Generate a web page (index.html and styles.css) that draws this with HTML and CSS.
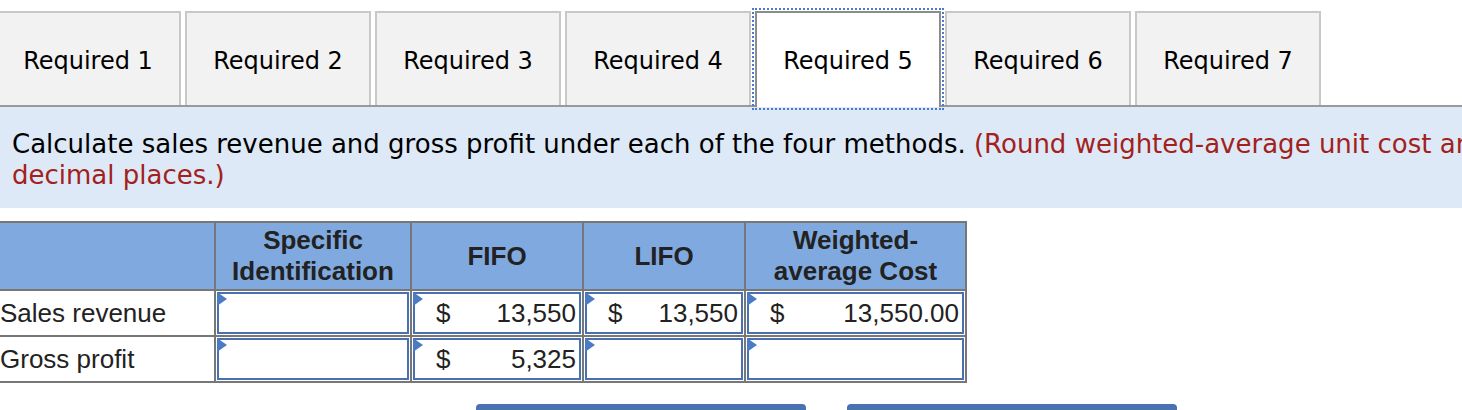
FILE: index.html
```html
<!DOCTYPE html>
<html>
<head>
<meta charset="utf-8">
<title>Required 5</title>
<link rel="stylesheet" href="styles.css">
</head>
<body>
<div class="page">
  <nav class="tabs">
    <div class="tab">Required 1</div>
    <div class="tab">Required 2</div>
    <div class="tab">Required 3</div>
    <div class="tab">Required 4</div>
    <div class="tab active">Required 5</div>
    <div class="tab">Required 6</div>
    <div class="tab">Required 7</div>
  </nav>
  <div class="question">Calculate sales revenue and gross profit under each of the four methods. <span class="hint">(Round weighted-average unit cost and final answers to 2<br>decimal places.)</span></div>
  <div class="grid">
    <div class="hd"></div>
    <div class="hd">Specific Identification</div>
    <div class="hd">FIFO</div>
    <div class="hd">LIFO</div>
    <div class="hd">Weighted-average Cost</div>

    <div class="lbl">Sales revenue</div>
    <div class="cell"><div class="inp"></div></div>
    <div class="cell"><div class="inp"><span>$</span><span>13,550</span></div></div>
    <div class="cell"><div class="inp"><span>$</span><span>13,550</span></div></div>
    <div class="cell"><div class="inp"><span>$</span><span>13,550.00</span></div></div>

    <div class="lbl">Gross profit</div>
    <div class="cell"><div class="inp"></div></div>
    <div class="cell"><div class="inp"><span>$</span><span>5,325</span></div></div>
    <div class="cell"><div class="inp"></div></div>
    <div class="cell"><div class="inp"></div></div>
  </div>
  <div class="nav">
    <button class="navbtn">&lt; Required 4</button>
    <button class="navbtn">Required 6 &gt;</button>
  </div>
</div>
</body>
</html>
```

FILE: styles.css
```css
html, body {
  margin: 0;
  padding: 0;
  overflow: hidden;
  background: #fff;
}
body {
  width: 1462px;
  height: 410px;
}
.page {
  width: 2100px;
}
.tabs {
  display: flex;
  gap: 4px;
  padding-top: 11px;
  margin-left: -5px;
  height: 94px;
  border-bottom: 2px solid #9a9a9a;
}
.tab {
  box-sizing: border-box;
  width: 186px;
  height: 94px;
  flex: none;
  padding-top: 3px;
  border: 2px solid #c8c8c8;
  border-bottom: none;
  background: #f2f2f2;
  display: flex;
  align-items: center;
  justify-content: center;
  font-family: "DejaVu Sans", Verdana, sans-serif;
  font-size: 24px;
  color: #000;
}
.tab.active {
  position: relative;
  height: 96px;
  padding-bottom: 2px;
  background: #fff;
  border-color: #8c8c8c;
  outline: 2px dotted #4a7bc8;
  outline-offset: 1px;
}
.question {
  box-sizing: border-box;
  height: 101px;
  padding: 22px 12px 0;
  background: #dde9f6;
  font-family: "DejaVu Sans", Verdana, sans-serif;
  font-size: 26px;
  line-height: 31px;
  color: #000;
}
.hint {
  color: #a3211c;
}
.grid {
  margin-top: 13px;
  display: grid;
  width: max-content;
  grid-template-columns: 214px 194px 170px 160px 219px;
  grid-template-rows: 66px 44px 44px;
  gap: 2px;
  padding: 2px 2px 2px 0;
  background: #777;
  font-family: "Liberation Sans", Arial, sans-serif;
  font-size: 26px;
  color: #222;
}
.hd {
  background: #80aadf;
  font-weight: bold;
  line-height: 31px;
  text-align: center;
  display: flex;
  align-items: center;
  justify-content: center;
  padding: 0 4px;
}
.lbl {
  background: #fff;
  display: flex;
  align-items: center;
}
.cell {
  position: relative;
  background: #fff;
  padding: 1px;
}
.cell::before {
  content: "";
  position: absolute;
  left: 1px;
  top: 1px;
  width: 0;
  height: 0;
  border-left: 10px solid #4a7bc4;
  border-top: 7px solid transparent;
  border-bottom: 7px solid transparent;
}
.inp {
  box-sizing: border-box;
  height: 100%;
  border: 2px solid #4a70b0;
  display: flex;
  align-items: center;
  justify-content: space-between;
  padding: 0 3px 0 21px;
}
.nav {
  margin-top: 21px;
  padding-left: 476px;
  display: flex;
  gap: 41px;
}
.navbtn {
  width: 330px;
  height: 64px;
  border: none;
  border-radius: 4px;
  background: #4a72b0;
  color: #fff;
  font-family: "DejaVu Sans", Verdana, sans-serif;
  font-size: 22px;
  padding-top: 36px;
}
```
